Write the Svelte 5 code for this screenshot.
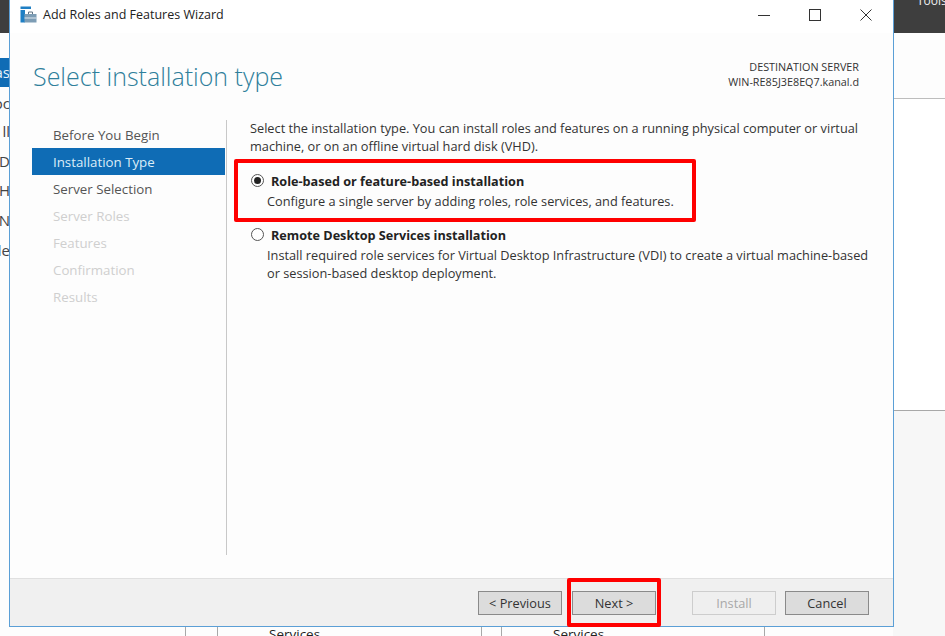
<script>
  const steps = [
    { label: 'Before You Begin', state: 'done' },
    { label: 'Installation Type', state: 'active' },
    { label: 'Server Selection', state: 'done' },
    { label: 'Server Roles', state: 'off' },
    { label: 'Features', state: 'off' },
    { label: 'Confirmation', state: 'off' },
    { label: 'Results', state: 'off' }
  ];
  const backdropNav = [
    { text: 'as', top: 58, active: true },
    { text: 'oc', top: 89 },
    { text: 'll', top: 117 },
    { text: 'D', top: 147 },
    { text: 'H', top: 176 },
    { text: 'N', top: 206 },
    { text: 'le', top: 236 }
  ];
</script>

<div class="desktop">
  <!-- server manager showing behind the wizard -->
  <div class="back-top-left"></div>
  <div class="back-top-right"><span>Tools</span></div>
  <div class="back-panel"></div>
  <div class="back-lower"></div>
  {#each backdropNav as item}
    <div class="back-nav" class:active={item.active} style="top: {item.top}px"><span>{item.text}</span></div>
  {/each}
  <div class="back-card card-edge"></div>
  <div class="back-card card-a"><span>Services</span></div>
  <div class="back-card card-b"><span>Services</span></div>

  <div class="window">
    <div class="titlebar">
      <svg class="app-icon" width="17" height="17" viewBox="0 0 17 17">
        <rect x="0.5" y="0.5" width="10.5" height="2.5" fill="#1f7fc4" />
        <rect x="0.5" y="4" width="4.5" height="12.5" fill="#1f7fc4" />
        <path d="M8.5 8V6h4v2" fill="none" stroke="#5f7282" stroke-width="1" />
        <rect x="4.5" y="8" width="12" height="8.5" fill="#7d9db5" />
        <rect x="4.5" y="11.5" width="12" height="1" fill="#dfe8ef" />
      </svg>
      <span class="title">Add Roles and Features Wizard</span>
      <div class="controls">
        <svg width="12" height="12" viewBox="0 0 12 12"><path d="M0 6.5h12" stroke="#333" stroke-width="1" /></svg>
        <svg width="12" height="12" viewBox="0 0 12 12"><rect x="0.5" y="0.5" width="11" height="11" fill="none" stroke="#333" stroke-width="1" /></svg>
        <svg width="12" height="12" viewBox="0 0 12 12"><path d="M0.5 0.5l11 11M11.5 0.5l-11 11" stroke="#333" stroke-width="1" /></svg>
      </div>
    </div>

    <div class="body">
      <header class="head">
        <h1>Select installation type</h1>
        <div class="dest">
          <div>DESTINATION SERVER</div>
          <div>WIN-RE85J3E8EQ7.kanal.d</div>
        </div>
      </header>

      <div class="main">
        <nav class="steps">
          {#each steps as step}
            <div class="step {step.state}">{step.label}</div>
          {/each}
        </nav>
        <div class="content">
          <p class="intro">Select the installation type. You can install roles and features on a running physical computer or virtual machine, or on an offline virtual hard disk (VHD).</p>
          <div class="option first">
            <div class="option-head">
              <span class="radio checked"></span>
              <span class="option-label">Role-based or feature-based installation</span>
            </div>
            <p class="option-desc">Configure a single server by adding roles, role services, and features.</p>
          </div>
          <div class="option">
            <div class="option-head">
              <span class="radio"></span>
              <span class="option-label">Remote Desktop Services installation</span>
            </div>
            <p class="option-desc">Install required role services for Virtual Desktop Infrastructure (VDI) to create a virtual machine-based or session-based desktop deployment.</p>
          </div>
        </div>
      </div>
    </div>

    <footer class="footer">
      <button class="prev">&lt; Previous</button>
      <button>Next &gt;</button>
      <button class="install" disabled>Install</button>
      <button>Cancel</button>
    </footer>
  </div>

  <!-- annotation boxes drawn over the screenshot -->
  <div class="mark mark-role"></div>
  <div class="mark mark-next"></div>
</div>

<style>
  :global(body) {
    margin: 0;
    background: #fff;
  }

  .desktop {
    position: relative;
    width: 945px;
    height: 636px;
    overflow: hidden;
    background: #fdfdfd;
    font-family: "Open Sans", "Noto Sans", sans-serif;
    color: #333;
  }

  .back-top-left {
    position: absolute;
    left: 0;
    top: 0;
    width: 10px;
    height: 33px;
    background: #3e3e3e;
  }

  .back-top-right {
    position: absolute;
    left: 893px;
    top: 0;
    width: 52px;
    height: 33px;
    background: #3e3e3e;
    overflow: hidden;
  }

  .back-top-right span {
    position: absolute;
    left: 24px;
    top: -8px;
    font-size: 12px;
    color: #eee;
  }

  .back-panel {
    position: absolute;
    left: 893px;
    top: 98px;
    width: 52px;
    height: 312px;
    border-top: 1px solid #bdbdbd;
    box-sizing: border-box;
    background: #fff;
  }

  .back-lower {
    position: absolute;
    left: 893px;
    top: 410px;
    width: 52px;
    height: 226px;
    border-top: 1px solid #a8a8a8;
    box-sizing: border-box;
    background: #f7f7f7;
  }

  .back-nav {
    position: absolute;
    left: 0;
    width: 10px;
    height: 29px;
    line-height: 29px;
    font-size: 15px;
    color: #444;
    overflow: hidden;
    white-space: nowrap;
  }

  .back-nav span {
    position: absolute;
    right: 0;
  }

  .back-nav.active {
    background: #0f6cb5;
    color: #e8f2fa;
  }

  .back-card {
    position: absolute;
    top: 626px;
    height: 10px;
    border-left: 1px solid #a8a8a8;
    border-right: 1px solid #a8a8a8;
    box-sizing: border-box;
    overflow: hidden;
    font-size: 13.5px;
    line-height: 17px;
    color: #222;
  }

  .card-edge {
    left: 185px;
    width: 33px;
  }

  .card-a {
    left: 217px;
    width: 265px;
    padding-left: 51px;
  }

  .card-b {
    left: 501px;
    width: 264px;
    padding-left: 51px;
  }

  .window {
    position: absolute;
    left: 9px;
    top: -1px;
    width: 885px;
    height: 628px;
    box-sizing: border-box;
    border: 1px solid #5b9fd6;
    background: #fff;
    display: flex;
    flex-direction: column;
  }

  .titlebar {
    height: 33px;
    flex: none;
    box-sizing: border-box;
    display: flex;
    align-items: center;
    background: #fff;
    padding: 0 0 4px 10px;
  }

  .app-icon {
    margin-right: 6px;
  }

  .title {
    font-size: 12.5px;
    color: #222;
  }

  .controls {
    margin-left: auto;
    display: flex;
    gap: 39px;
    padding-right: 21px;
  }

  .body {
    flex: 1;
    display: flex;
    flex-direction: column;
    background: #fdfdfd;
  }

  .head {
    height: 87px;
    flex: none;
    display: flex;
    justify-content: space-between;
    align-items: flex-start;
    padding: 0 34px 0 23px;
  }

  h1 {
    margin: 24px 0 0;
    font-size: 25px;
    line-height: 38px;
    font-weight: 300;
    color: #2f7f9b;
  }

  .dest {
    margin-top: 26px;
    text-align: right;
    font-size: 10.8px;
    line-height: 15px;
    color: #333;
  }

  .main {
    flex: 1;
    display: flex;
    padding-bottom: 23px;
  }

  .steps {
    width: 193px;
    margin-left: 22px;
    padding-top: 1px;
    flex: none;
  }

  .step {
    height: 27px;
    line-height: 29px;
    padding-left: 21px;
    font-size: 13.3px;
    color: #555;
    overflow: hidden;
  }

  .step.active {
    background: #0f6cb5;
    color: #dcecf8;
  }

  .step.off {
    color: #cfcfcf;
  }

  .content {
    margin-left: 1px;
    flex: 1;
    border-left: 1px solid #c8c8c8;
    padding: 0 20px 0 23px;
  }

  .intro {
    margin: -1px 0 16px;
    font-size: 12.75px;
    line-height: 18px;
    color: #333;
  }

  .option {
    margin-bottom: 10px;
  }

  .option.first {
    margin-bottom: 15px;
  }

  .option-head {
    display: flex;
    align-items: center;
    height: 20px;
    margin-left: 1px;
  }

  .radio {
    width: 13px;
    height: 13px;
    box-sizing: border-box;
    border: 1px solid #555;
    border-radius: 50%;
    background: #fff;
    margin-right: 7px;
    margin-top: -2px;
    display: flex;
    align-items: center;
    justify-content: center;
  }

  .radio.checked::after {
    content: "";
    width: 7px;
    height: 7px;
    border-radius: 50%;
    background: #222;
  }

  .option-label {
    font-size: 12.65px;
    font-weight: 700;
    color: #222;
  }

  .option-desc {
    margin: 1px 0 0 17px;
    font-size: 12.75px;
    line-height: 18px;
    color: #333;
  }

  .footer {
    height: 48px;
    flex: none;
    box-sizing: border-box;
    border-top: 1px solid #e0e0e0;
    background: #f0f0f0;
    display: flex;
    align-items: center;
    justify-content: flex-end;
    padding: 0 24px 0 0;
    gap: 9px;
  }

  button {
    width: 84px;
    height: 24px;
    box-sizing: border-box;
    border: 1px solid #8a8a8a;
    border-radius: 0;
    background: #dcdcdc;
    font-family: inherit;
    font-size: 12.75px;
    color: #333;
    padding: 0;
  }

  .prev {
    margin-right: 1px;
  }

  .install {
    margin-left: 27px;
    background: #efefef;
    border-color: #cdcdcd;
    color: #a8a8a8;
  }

  .mark {
    position: absolute;
    box-sizing: border-box;
    border: 4px solid #f00;
    border-radius: 2px;
  }

  .mark-role {
    left: 234px;
    top: 159px;
    width: 462px;
    height: 63px;
  }

  .mark-next {
    left: 567px;
    top: 578px;
    width: 94px;
    height: 49px;
  }
</style>
